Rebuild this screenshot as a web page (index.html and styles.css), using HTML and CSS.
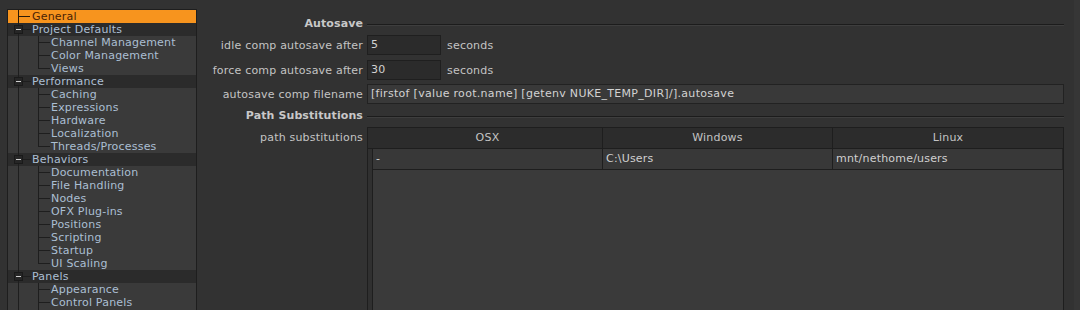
FILE: index.html
```html
<!DOCTYPE html>
<html>
<head>
<meta charset="utf-8">
<link rel="stylesheet" href="styles.css">
</head>
<body>
<div class="tree">
  <div class="row root sel">General</div>
  <div class="row cat"><span class="box"></span>Project Defaults</div>
  <div class="row child">Channel Management</div>
  <div class="row child">Color Management</div>
  <div class="row child last">Views</div>
  <div class="row cat"><span class="box"></span>Performance</div>
  <div class="row child">Caching</div>
  <div class="row child">Expressions</div>
  <div class="row child">Hardware</div>
  <div class="row child">Localization</div>
  <div class="row child last">Threads/Processes</div>
  <div class="row cat"><span class="box"></span>Behaviors</div>
  <div class="row child">Documentation</div>
  <div class="row child">File Handling</div>
  <div class="row child">Nodes</div>
  <div class="row child">OFX Plug-ins</div>
  <div class="row child">Positions</div>
  <div class="row child">Scripting</div>
  <div class="row child">Startup</div>
  <div class="row child last">UI Scaling</div>
  <div class="row cat"><span class="box"></span>Panels</div>
  <div class="row child">Appearance</div>
  <div class="row child">Control Panels</div>
  <div class="row child filler"></div>
</div>
<div class="content">
  <div class="frow heading h1">
    <div class="label">Autosave</div>
    <div class="rule"></div>
  </div>
  <div class="frow r1">
    <div class="label">idle comp autosave after</div>
    <div class="field"><div class="num">5</div><span class="unit">seconds</span></div>
  </div>
  <div class="frow r2">
    <div class="label">force comp autosave after</div>
    <div class="field"><div class="num">30</div><span class="unit">seconds</span></div>
  </div>
  <div class="frow r3">
    <div class="label">autosave comp filename</div>
    <div class="text">[firstof [value root.name] [getenv NUKE_TEMP_DIR]/].autosave</div>
  </div>
  <div class="frow heading h2">
    <div class="label">Path Substitutions</div>
    <div class="rule"></div>
  </div>
  <div class="frow tablerow">
    <div class="label tlabel">path substitutions</div>
    <div class="table">
      <div class="thead">
        <span class="corner"></span>
        <span class="th">OSX</span>
        <span class="th div">Windows</span>
        <span class="th div">Linux</span>
      </div>
      <div class="tbody">
        <div class="gutter"></div>
        <div class="rows">
          <div class="tr">
            <span class="td">-</span>
            <span class="td div">C:\Users</span>
            <span class="td div">mnt/nethome/users</span>
          </div>
        </div>
      </div>
    </div>
  </div>
</div>
<div class="strip"></div>
</body>
</html>
```
FILE: styles.css
```css
html, body {
  margin: 0;
  padding: 0;
}
body {
  width: 1080px;
  height: 310px;
  overflow: hidden;
  display: flex;
  align-items: flex-start;
  background: #323232;
  font-family: "DejaVu Sans", sans-serif;
  font-size: 11px;
  letter-spacing: 0.2px;
  color: #c4c4c4;
}

/* tree */
.tree {
  --ln: #1e1e1e;
  margin: 9px 0 0 7px;
  width: 188px;
  border: 1px solid #1e1e1e;
  border-bottom: none;
  background: #3a3a3a;
  flex: none;
}
.row {
  height: 13px;
  line-height: 14px;
  white-space: nowrap;
  color: #abbfd3;
  display: flex;
  align-items: center;
}
.root {
  padding-left: 24px;
  background:
    linear-gradient(var(--ln), var(--ln)) 10px 0 / 1px 100% no-repeat,
    linear-gradient(var(--ln), var(--ln)) 10px 6px / 12px 1px no-repeat,
    #3a3a3a;
}
.root.sel {
  background:
    linear-gradient(#2a1a08, #2a1a08) 10px 0 / 1px 100% no-repeat,
    linear-gradient(#2a1a08, #2a1a08) 10px 6px / 12px 1px no-repeat,
    #f7941e;
  color: #4a2306;
}
.cat {
  padding-left: 6px;
  background:
    linear-gradient(var(--ln), var(--ln)) 10px 0 / 1px 100% no-repeat,
    linear-gradient(var(--ln), var(--ln)) 15px 6px / 8px 1px no-repeat,
    #2b2b2b;
}
.box {
  width: 7px;
  height: 7px;
  margin-right: 9px;
  border: 1px solid #1a1a1a;
  background:
    linear-gradient(#cfcfcf, #cfcfcf) 1px 3px / 5px 1px no-repeat,
    #262626;
  flex: none;
}
.child {
  padding-left: 43px;
  background:
    linear-gradient(var(--ln), var(--ln)) 10px 0 / 1px 100% no-repeat,
    linear-gradient(var(--ln), var(--ln)) 30px 0 / 1px 100% no-repeat,
    linear-gradient(var(--ln), var(--ln)) 30px 6px / 12px 1px no-repeat,
    #3a3a3a;
}
.child.last {
  background:
    linear-gradient(var(--ln), var(--ln)) 10px 0 / 1px 100% no-repeat,
    linear-gradient(var(--ln), var(--ln)) 30px 0 / 1px 7px no-repeat,
    linear-gradient(var(--ln), var(--ln)) 30px 6px / 12px 1px no-repeat,
    #3a3a3a;
}

/* form */
.content {
  flex: 1;
  height: 310px;
  display: flex;
  flex-direction: column;
  padding-right: 10px;
  box-sizing: border-box;
}
.frow {
  display: grid;
  grid-template-columns: 166px 1fr;
  column-gap: 4px;
  align-items: center;
}
.label {
  text-align: right;
  white-space: nowrap;
  color: #c4c4c4;
}
.heading {
  height: 18px;
  line-height: 18px;
}
.heading .label {
  font-weight: bold;
  color: #c8c8c8;
  letter-spacing: 0.1px;
}
.h1 { margin-top: 15px; }
.h2 { margin-top: 3px; }
.rule {
  height: 0;
  border-top: 1px solid #1c1c1c;
  border-bottom: 1px solid #3e3e3e;
  margin-top: 2px;
}
.r1 { margin-top: 2px; height: 20px; }
.r2 { margin-top: 5px; height: 20px; }
.r3 { margin-top: 4px; height: 20px; }
.field {
  display: flex;
  align-items: center;
  gap: 6px;
}
.num {
  width: 74px;
  height: 20px;
  box-sizing: border-box;
  border: 1px solid #1f1f1f;
  background: #2b2b2b;
  padding-left: 3px;
  line-height: 18px;
  color: #d2d2d2;
}
.unit { color: #c4c4c4; }
.text {
  height: 20px;
  box-sizing: border-box;
  border: 1px solid #222;
  background: #393939;
  padding-left: 3px;
  line-height: 18px;
  color: #d2d2d2;
  white-space: nowrap;
  letter-spacing: 0.3px;
}

/* table */
.tablerow {
  margin-top: 2px;
  flex: 1;
  align-items: stretch;
}
.tlabel {
  line-height: 20px;
  padding-top: 1px;
}
.table {
  border: 1px solid #1e1e1e;
  border-bottom: none;
  display: flex;
  flex-direction: column;
  background: #3a3a3a;
}
.thead {
  display: grid;
  grid-template-columns: 5px 229px 230px 1fr;
  height: 20px;
  background: #2c2c2c;
  border-bottom: 1px solid #1e1e1e;
}
.th {
  text-align: center;
  line-height: 20px;
  color: #c4c4c4;
}
.div { border-left: 1px solid #1e1e1e; }
.tbody {
  flex: 1;
  display: flex;
}
.gutter {
  width: 4px;
  background: #303030;
  border-right: 1px solid #1e1e1e;
}
.rows {
  flex: 1;
  background: #3a3a3a;
}
.tr {
  display: grid;
  grid-template-columns: 229px 230px 1fr;
  height: 20px;
  background: #383838;
  border-bottom: 1px solid #1e1e1e;
  border-right: 1px solid #262626;
}
.td {
  line-height: 20px;
  padding-left: 3px;
  color: #d0d0d0;
  white-space: nowrap;
}
.strip {
  width: 6px;
  height: 310px;
  background: #363636;
  flex: none;
}
```
